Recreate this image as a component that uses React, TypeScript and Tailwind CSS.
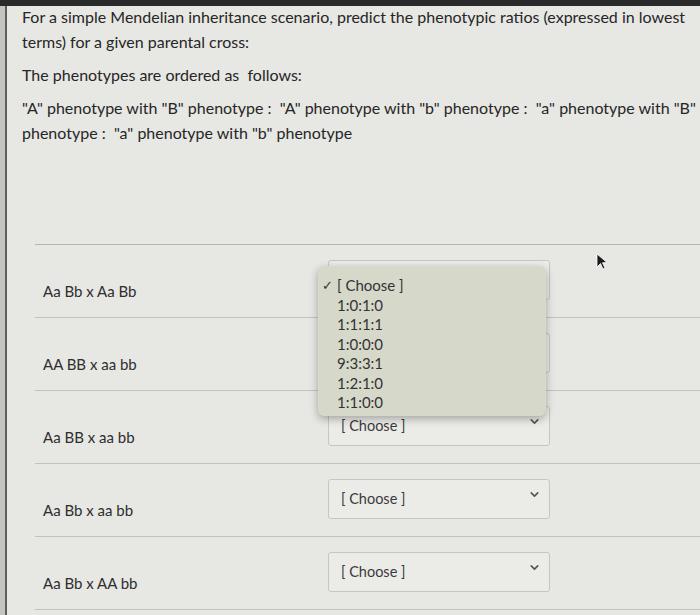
import { ChevronDown } from 'lucide-react'

const rows = ['Aa Bb x Aa Bb', 'AA BB x aa bb', 'Aa BB x aa bb', 'Aa Bb x aa bb', 'Aa Bb x AA bb']
const options = ['1:0:1:0', '1:1:1:1', '1:0:0:0', '9:3:3:1', '1:2:1:0', '1:1:0:0']

// the open menu covers the first two selects, so their label is not drawn
function Select({ covered }: { covered: boolean }) {
  return (
    <div className="flex h-[40px] w-[222px] items-center justify-between rounded-[3px] border border-[#c6c6c3] bg-[#ebebe8] pl-[12px] pr-[8px]">
      <span className="text-[14.5px] text-[#3a3a3a]">{covered ? '' : '[ Choose ]'}</span>
      <ChevronDown size={13} strokeWidth={3} className="mb-[10px] text-[#555]" />
    </div>
  )
}

export default function App() {
  return (
    <div
      className="relative h-[615px] w-[700px] overflow-hidden bg-[#e7e7e4] text-[#262626]"
      style={{ fontFamily: 'Lato, "Open Sans", sans-serif' }}
    >
      <div className="h-[6px] bg-[#2a2a2c]" />
      <div className="flex h-[609px]">
        <div className="w-[5px] bg-[#c4c4c1]" />
        <div className="w-[2px] bg-[#5f5f5f]" />
        <div className="flex flex-1 flex-col">
          <div className="-mt-[2px] pl-[15px] text-[16px] leading-[25px]">
            <p className="mb-[8px] pr-[10px]">
              For a simple Mendelian inheritance scenario, predict the phenotypic ratios (expressed in lowest
              terms) for a given parental cross:
            </p>
            <p className="mb-[8px]">The phenotypes are ordered as&nbsp; follows:</p>
            <p className="whitespace-nowrap">
              "A" phenotype with "B" phenotype :&nbsp; "A" phenotype with "b" phenotype :&nbsp; "a" phenotype with "B"
            </p>
            <p>phenotype :&nbsp; "a" phenotype with "b" phenotype</p>
          </div>

          <div className="ml-[28px] mt-[99px] flex flex-col border-t border-[#b5b5b2]">
            {rows.map((r, i) => (
              <div key={r} className="flex h-[73px] items-start border-b border-[#c2c2bf]">
                <div className="w-[293px] pl-[8px] pt-[35px] text-[15px] text-[#2e2e2e]">{r}</div>
                <div className="pt-[15px]">
                  <Select covered={i < 2} />
                </div>
              </div>
            ))}
          </div>
        </div>
      </div>

      <div className="absolute left-[318px] top-[266px] w-[228px] rounded-[6px] bg-[#d6d8ca] pb-[3px] pt-[10px] shadow-[0_3px_8px_rgba(0,0,0,0.3)]">
        <div className="flex items-center text-[15px] leading-[19.5px] text-[#333]">
          <span className="w-[19px] pl-[4px] text-[13px]">✓</span>
          <span>[ Choose ]</span>
        </div>
        {options.map((o) => (
          <div key={o} className="pl-[19px] text-[15px] leading-[19.5px] text-[#333]">
            {o}
          </div>
        ))}
      </div>

      <svg className="absolute left-[596px] top-[253px]" width="14" height="18" viewBox="0 0 14 18">
        <path d="M1 1 L1 14 L4.5 10.5 L7 16 L9 15 L6.5 9.8 L11 9.5 Z" fill="#1a1a1a" stroke="#fff" strokeWidth="0.8" />
      </svg>
    </div>
  )
}
